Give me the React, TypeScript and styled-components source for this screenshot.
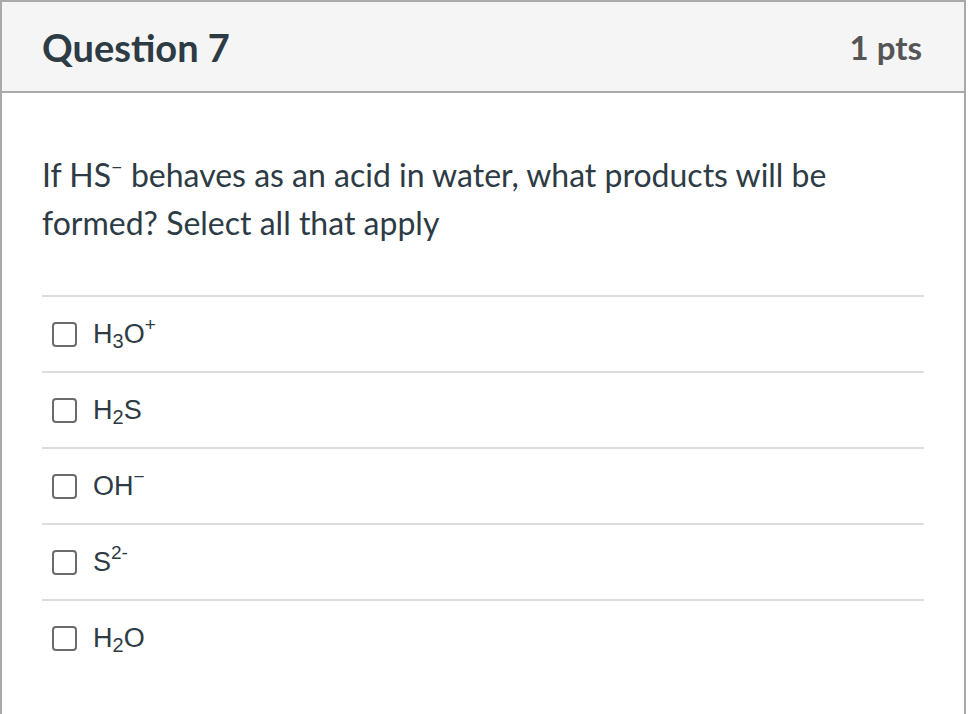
import { createGlobalStyle } from "styled-components";
import styled from "styled-components";

const GlobalStyle = createGlobalStyle`
  html, body {
    margin: 0;
    padding: 0;
    background: #ffffff;
  }
  body {
    font-family: Lato, "Liberation Sans", sans-serif;
    color: #2d3b45;
  }
`;

interface AnswerData {
  id: string;
  base: string;
  sub?: string;
  tail?: string;
  sup?: string;
}

const answers: AnswerData[] = [
  { id: "h3o", base: "H", sub: "3", tail: "O", sup: "+" },
  { id: "h2s", base: "H", sub: "2", tail: "S" },
  { id: "oh", base: "OH", sup: "−" },
  { id: "s2", base: "S", sup: "2-" },
  { id: "h2o", base: "H", sub: "2", tail: "O" },
];

const Card = styled.div`
  width: 966px;
  min-height: 714px;
  box-sizing: border-box;
  border: 2px solid #a9a9a9;
  border-bottom: none;
  background: #fff;
`;

const Header = styled.div`
  display: flex;
  align-items: center;
  justify-content: space-between;
  height: 89px;
  padding: 0 42px 0 40px;
  background: #f5f5f5;
  border-bottom: 2px solid #a9a9a9;
`;

const Title = styled.h2`
  margin: 0;
  font-family: Lato, sans-serif;
  font-weight: 700;
  font-size: 38px;
  color: #2d3b45;
`;

const Points = styled.div`
  font-family: Lato, sans-serif;
  font-weight: 700;
  font-size: 33px;
  color: #555555;
`;

const Body = styled.div`
  padding: 58px 40px 0;
`;

const Prompt = styled.p`
  margin: 0 0 48px;
  font-family: Lato, sans-serif;
  font-size: 32px;
  line-height: 48px;
  color: #2d3b45;

  sup {
    font-size: 20px;
    line-height: 0;
    vertical-align: 13px;
  }
`;

const AnswerList = styled.div`
  display: flex;
  flex-direction: column;
`;

const AnswerRow = styled.label`
  display: flex;
  align-items: center;
  gap: 16px;
  height: 74px;
  padding-left: 10px;
  border-top: 2px solid #dddddd;
  font-family: "Liberation Sans", Arial, sans-serif;
  font-size: 27px;
  color: #2d3b45;
`;

const Box = styled.span`
  width: 21px;
  height: 21px;
  flex: none;
  border: 2px solid #6b6b6b;
  border-radius: 4px;
  background: #fff;
`;

const Formula = styled.span`
  line-height: 1;

  sub {
    font-size: 20px;
    line-height: 0;
    vertical-align: -5px;
  }
  sup {
    font-size: 19px;
    line-height: 0;
    vertical-align: 12px;
  }
`;

function Answer({ item }: { item: AnswerData }) {
  return (
    <AnswerRow>
      <Box />
      <Formula>
        {item.base}
        {item.sub && <sub>{item.sub}</sub>}
        {item.tail}
        {item.sup && <sup>{item.sup}</sup>}
      </Formula>
    </AnswerRow>
  );
}

export default function App() {
  return (
    <>
      <GlobalStyle />
      <Card>
        <Header>
          <Title>Question 7</Title>
          <Points>1 pts</Points>
        </Header>
        <Body>
          <Prompt>
            If HS<sup>−</sup> behaves as an acid in water, what products will be
            <br />
            formed? Select all that apply
          </Prompt>
          <AnswerList>
            {answers.map((a) => (
              <Answer key={a.id} item={a} />
            ))}
          </AnswerList>
        </Body>
      </Card>
    </>
  );
}
